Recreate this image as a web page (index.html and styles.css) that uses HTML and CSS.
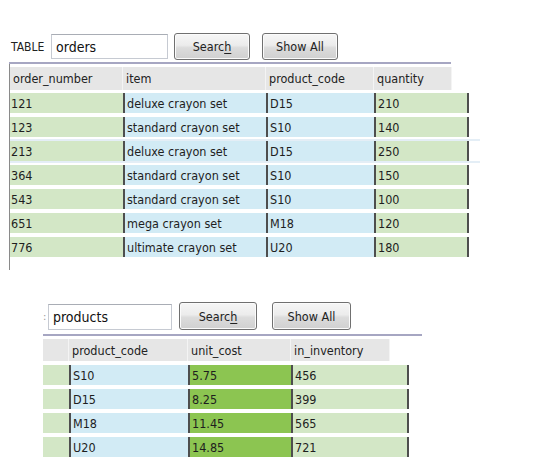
FILE: index.html
```html
<!DOCTYPE html>
<html>
<head>
<meta charset="utf-8">
<link rel="stylesheet" href="styles.css">
</head>
<body>
<section class="panel panel-orders">
  <div class="toolbar">
    <span class="label">TABLE</span>
    <span class="input in-orders">orders</span>
    <button class="btn btn-search">Searc<u>h</u></button>
    <button class="btn btn-show">Show All</button>
  </div>
  <div class="rule rule-orders"></div>
  <div class="grid grid-orders">
    <div class="head"><span>order_number</span><span>item</span><span>product_code</span><span>quantity</span></div>
    <div class="row"><span class="g">121</span><span class="b bl">deluxe crayon set</span><span class="b bl">D15</span><span class="g bl br">210</span></div>
    <div class="row"><span class="g">123</span><span class="b bl">standard crayon set</span><span class="b bl">S10</span><span class="g bl br">140</span></div>
    <div class="row sel"><span class="g">213</span><span class="b bl">deluxe crayon set</span><span class="b bl">D15</span><span class="g bl br">250</span></div>
    <div class="row"><span class="g">364</span><span class="b bl">standard crayon set</span><span class="b bl">S10</span><span class="g bl br">150</span></div>
    <div class="row"><span class="g">543</span><span class="b bl">standard crayon set</span><span class="b bl">S10</span><span class="g bl br">100</span></div>
    <div class="row"><span class="g">651</span><span class="b bl">mega crayon set</span><span class="b bl">M18</span><span class="g bl br">120</span></div>
    <div class="row"><span class="g">776</span><span class="b bl">ultimate crayon set</span><span class="b bl">U20</span><span class="g bl br">180</span></div>
  </div>
</section>
<section class="panel panel-products">
  <div class="toolbar toolbar-2">
    <span class="label dots">:</span>
    <span class="input in-products">products</span>
    <button class="btn btn-search2">Searc<u>h</u></button>
    <button class="btn btn-show2">Show All</button>
  </div>
  <div class="rule rule-products"></div>
  <div class="grid grid-products">
    <div class="head"><span></span><span>product_code</span><span>unit_cost</span><span>in_inventory</span></div>
    <div class="row"><span class="g"></span><span class="b bl">S10</span><span class="v bl">5.75</span><span class="g bl br">456</span></div>
    <div class="row"><span class="g"></span><span class="b bl">D15</span><span class="v bl">8.25</span><span class="g bl br">399</span></div>
    <div class="row"><span class="g"></span><span class="b bl">M18</span><span class="v bl">11.45</span><span class="g bl br">565</span></div>
    <div class="row"><span class="g"></span><span class="b bl">U20</span><span class="v bl">14.85</span><span class="g bl br">721</span></div>
  </div>
</section>
</body>
</html>
```
FILE: styles.css
```css
html, body {
  margin: 0;
  padding: 0;
  background: #ffffff;
}
body {
  width: 553px;
  height: 473px;
  overflow: hidden;
  font-family: "DejaVu Sans Condensed", "DejaVu Sans", sans-serif;
  font-size: 12.5px;
  color: #222;
}
.panel-orders {
  padding: 33px 0 0 9px;
}
.toolbar {
  display: flex;
  align-items: center;
  height: 27px;
}
.label {
  margin-left: 2px;
  width: 40px;
  font-size: 12px;
  color: #222;
}
.input {
  box-sizing: border-box;
  display: flex;
  align-items: center;
  border: 1px solid #c6cad2;
  border-top-color: #a9adb5;
  background: #fff;
  padding-left: 4px;
  font-size: 14px;
  color: #111;
}
.in-orders {
  width: 117px;
  height: 25px;
}
.btn {
  box-sizing: border-box;
  font-family: inherit;
  font-size: 12.5px;
  color: #222;
  border: 1px solid #707070;
  border-radius: 3px;
  background: linear-gradient(#f6f6f6 0%, #ececec 45%, #dcdcdc 55%, #d0d0d0 100%);
  box-shadow: inset 0 0 0 1px #fbfbfb;
  padding: 0;
  height: 27px;
}
.btn u { text-decoration-thickness: 1px; text-underline-offset: 2px; }
.btn-search { width: 76px; margin-left: 6px; }
.btn-show { width: 76px; margin-left: 12px; }

.rule {
  height: 2px;
  background: #a6a6c2;
}
.rule-orders {
  width: 442px;
  margin-top: 2px;
}
.grid-orders {
  border-left: 1px solid #8a8a8a;
  padding-top: 3px;
  padding-bottom: 9px;
  width: 470px;
}
.head {
  display: grid;
  height: 23px;
  align-items: center;
  margin-bottom: 3px;
}
.head span {
  background: #e6e6e6;
  height: 100%;
  display: flex;
  align-items: center;
  padding-left: 3px;
  border-right: 1px solid #f4f4f4;
  box-sizing: border-box;
  color: #222;
}
.grid-orders .head {
  grid-template-columns: 113px 143px 108px 78px;
}
.grid-orders .row {
  display: grid;
  grid-template-columns: 113px 143px 108px 95px;
  height: 20px;
  margin-bottom: 4px;
}
.row span {
  display: flex;
  align-items: center;
  padding-left: 2px;
  box-sizing: border-box;
  color: #1e1e1e;
}
.row .g { background: #d3e7c6; }
.row .b { background: #d2ebf5; }
.row .v { background: #8cc551; }
.row .bl { border-left: 2px solid #4e4e4e; }
.row .br { border-right: 2px solid #4e4e4e; }
.grid-orders .row span:first-child { padding-left: 1px; }
.row.sel {
  box-shadow: 0 -2px 0 0 #e4eef6, 0 2px 0 0 #e4eef6;
}

.panel-products {
  padding: 32px 0 0 43px;
}
.toolbar-2 {
  height: 28px;
}
.dots {
  margin-left: 0;
  width: 5px;
  color: #9a9a9a;
  font-size: 11px;
}
.in-products {
  width: 124px;
  height: 26px;
  margin-top: 2px;
}
.btn-search2 { width: 78px; height: 28px; margin-left: 7px; }
.btn-show2 { width: 79px; height: 28px; margin-left: 15px; }
.rule-products {
  width: 379px;
  margin-top: 4px;
}
.grid-products {
  padding-top: 3px;
}
.grid-products .head {
  grid-template-columns: 26px 119px 103px 99px;
  height: 22px;
  margin-bottom: 4px;
}
.grid-products .row {
  display: grid;
  grid-template-columns: 26px 119px 103px 118px;
  height: 20px;
  margin-bottom: 4px;
}
```
